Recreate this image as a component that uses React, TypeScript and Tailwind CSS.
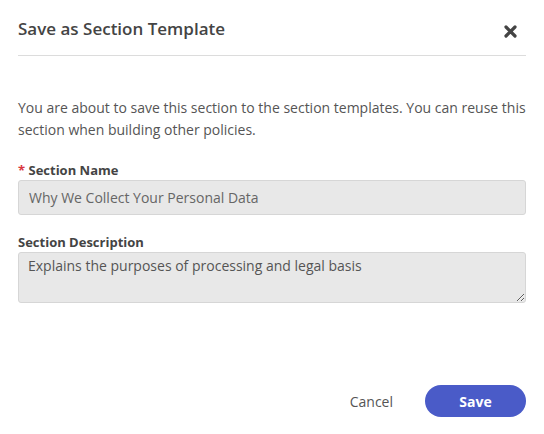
import React from "react";

const App = () => {
  return (
    <div className="w-[544px] h-[434px] bg-white font-['Open_Sans',sans-serif] text-[#555] flex flex-col">
      <div className="mx-[18px] h-[56px] flex items-center justify-between border-b border-[#dcdcdc]">
        <h2 className="text-[17px] font-semibold text-[#444] pt-[3px]">Save as Section Template</h2>
        <button className="w-[20px] h-[20px] flex items-center justify-center mr-[6px] mt-[8px] text-[#444]">
          <svg width="13" height="13" viewBox="0 0 13 13">
            <path d="M2 2 L11 11 M11 2 L2 11" stroke="currentColor" strokeWidth="3.2" strokeLinecap="round" />
          </svg>
        </button>
      </div>
      <div className="px-[18px] pt-[41px] flex-1 flex flex-col">
        <p className="text-[14px] leading-[22px] text-[#555]">
          You are about to save this section to the section templates. You can reuse this section when building other policies.
        </p>
        <label className="mt-[20px] text-[13px] font-bold text-[#444] leading-[18px]">
          <span className="text-[#d9363e]">*</span> Section Name
        </label>
        <input
          readOnly
          value="Why We Collect Your Personal Data"
          className="mt-[1px] h-[35px] w-full rounded-[3px] border border-[#d6d6d6] bg-[#e8e8e8] px-[10px] text-[14px] text-[#666] outline-none"
        />
        <label className="mt-[18px] text-[13px] font-bold text-[#444] leading-[18px]">Section Description</label>
        <textarea
          readOnly
          value="Explains the purposes of processing and legal basis"
          className="mt-[1px] h-[51px] w-full rounded-[3px] border border-[#d6d6d6] bg-[#e8e8e8] px-[9px] py-[3px] text-[14px] leading-[20px] text-[#555] outline-none"
        />
        <div className="mt-auto mb-[17px] flex items-center justify-end gap-[32px]">
          <button className="text-[14px] text-[#555]">Cancel</button>
          <button className="w-[101px] h-[32px] rounded-full bg-[#4a5bc8] text-white text-[14px] font-bold">Save</button>
        </div>
      </div>
    </div>
  );
};

export default App;
